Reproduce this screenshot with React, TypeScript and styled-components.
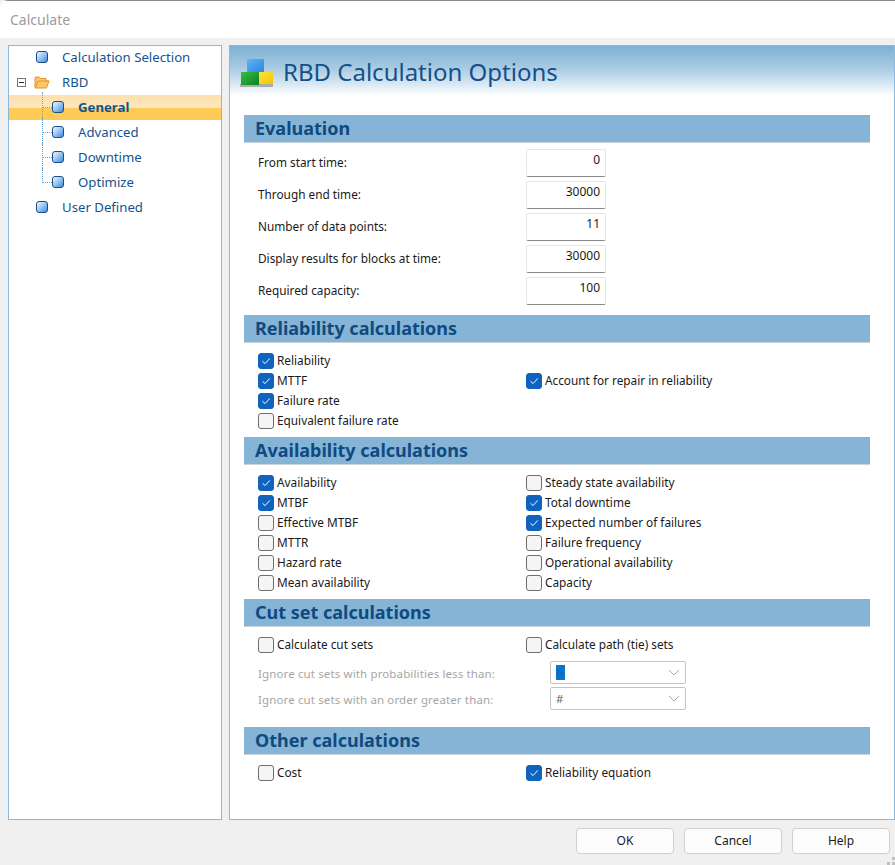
import React from 'react';
import styled, { createGlobalStyle } from 'styled-components';

const GlobalStyle = createGlobalStyle`
  html, body { margin: 0; padding: 0; background: #f0f0f0; }
  body { font-family: "Noto Sans", "Open Sans", "Liberation Sans", sans-serif; }
`;

const Win = styled.div`
  position: relative;
  width: 895px;
  height: 865px;
  overflow: hidden;
  background: #f0f0f0;
  display: flex;
  flex-direction: column;
  border-top-left-radius: 8px;
`;
const TitleBar = styled.div`
  height: 38px;
  flex: none;
  box-sizing: border-box;
  padding: 9px 0 0 10px;
  background: #fff;
  color: #9b9b9b;
  font-size: 14px;
  line-height: 20px;
  border-top: 1px solid #8a8a8a;
`;
const Main = styled.div`
  display: flex;
  gap: 7px;
  padding: 7px 0 0 8px;
  height: 775px;
  flex: none;
`;
const Tree = styled.div`
  width: 214px;
  flex: none;
  box-sizing: border-box;
  padding: 0 1px;
  box-shadow: inset 0 0 0 1px #8fb8d8;
  background: #fff;
`;
const TreeRow = styled.div<{ $depth: number; $selected?: boolean }>`
  height: 25px;
  display: flex;
  align-items: center;
  box-sizing: border-box;
  position: relative;
  padding: 0 0 2px ${(p) => (p.$depth === 1 ? 69 : 53)}px;
  font-size: 13.2px;
  color: #14538f;
  font-weight: ${(p) => (p.$selected ? 700 : 400)};
  background: ${(p) =>
    p.$selected
      ? 'linear-gradient(#fde0ad 0%, #fee6bd 50%, #ffcb57 52%, #ffcb57 100%)'
      : 'transparent'};
`;
const Bullet = styled.span<{ $depth: number }>`
  position: absolute;
  left: ${(p) => (p.$depth === 1 ? 43 : 27)}px;
  top: 6px;
  width: 12px;
  height: 12px;
  box-sizing: border-box;
  border: 1px solid #134f8b;
  border-radius: 3px;
  background: linear-gradient(135deg, #f2f7fd 0%, #a3c9f3 45%, #3f8ae0 100%);
`;
const Expander = styled.span`
  position: absolute;
  left: 8px;
  top: 8px;
  width: 9px;
  height: 9px;
  box-sizing: border-box;
  border: 1px solid #777;
  background: #fff;
  &::after {
    content: '';
    position: absolute;
    left: 1px;
    top: 3px;
    width: 5px;
    height: 1px;
    background: #222;
  }
`;
const FolderWrap = styled.span`
  position: absolute;
  left: 25px;
  top: 5px;
  display: flex;
`;
const Connector = styled.span<{ $last?: boolean }>`
  position: absolute;
  left: 33px;
  top: -3px;
  width: 9px;
  height: ${(p) => (p.$last ? 16 : 28)}px;
  box-sizing: border-box;
  border-left: 1px dotted #5da3d6;
  &::after {
    content: '';
    position: absolute;
    left: 0;
    top: 15px;
    width: 9px;
    border-top: 1px dotted #5da3d6;
  }
`;

const Panel = styled.div`
  flex: 1;
  box-sizing: border-box;
  border: 1px solid #8fb8d8;
  background: #fff;
  display: flex;
  flex-direction: column;
`;
const Header = styled.div`
  height: 50px;
  flex: none;
  display: flex;
  align-items: center;
  gap: 10px;
  padding-left: 10px;
  background: linear-gradient(#7eb0d4 0%, #a9cbe3 45%, #e6f0f7 85%, #ffffff 100%);
`;
const HeaderTitle = styled.div`
  font-size: 24px;
  color: #14508a;
  line-height: 32px;
  padding-top: 2px;
`;
const Body = styled.div`
  padding: 19px 24px 0 14px;
  display: flex;
  flex-direction: column;
`;
const SectionBar = styled.div`
  height: 28px;
  box-sizing: border-box;
  padding-left: 11px;
  background: #85b4d6;
  border-bottom: 1px solid #c9d3da;
  color: #0f4a80;
  font-size: 18px;
  font-weight: 700;
  line-height: 26px;
`;
const FormList = styled.div`
  display: flex;
  flex-direction: column;
  gap: 4px;
  padding: 6px 0 10px 14px;
`;
const FormRow = styled.div`
  display: grid;
  grid-template-columns: 268px 80px;
  align-items: center;
  height: 28px;
  font-size: 11.8px;
  color: #1a1a1a;
`;
const Label = styled.span`
  padding-bottom: 2px;
`;
const NumInput = styled.div`
  box-sizing: border-box;
  height: 28px;
  background: #fff;
  border: 1px solid #e6e6e6;
  border-bottom: 1px solid #8a8a8a;
  border-radius: 2px;
  text-align: right;
  padding: 1px 5px 0 0;
  font-size: 12px;
  line-height: 18px;
  color: #1a1a1a;
`;
const CheckGrid = styled.div<{ $pb: number }>`
  display: grid;
  grid-template-columns: 268px 1fr;
  grid-auto-rows: 20px;
  padding: 8px 0 ${(p) => p.$pb}px 14px;
`;
const CheckItem = styled.div`
  display: flex;
  align-items: center;
  gap: 3px;
  font-size: 11.8px;
  color: #1a1a1a;
`;
const Box = styled.span<{ $on?: boolean }>`
  width: 16px;
  height: 16px;
  flex: none;
  box-sizing: border-box;
  border-radius: 3px;
  display: flex;
  align-items: center;
  justify-content: center;
  border: 1px solid ${(p) => (p.$on ? '#0f62bd' : '#6e6e6e')};
  background: ${(p) => (p.$on ? '#0f62bd' : '#f5f5f5')};
`;
const IgnoreList = styled.div`
  display: flex;
  flex-direction: column;
  gap: 3px;
  padding: 6px 0 17px 14px;
`;
const IgnoreRow = styled.div`
  display: grid;
  grid-template-columns: 292px 136px;
  align-items: center;
  height: 23px;
  font-size: 11.5px;
  letter-spacing: 0.13px;
  color: #a6a6a6;
`;
const IgnoreLabel = styled.span`
  padding-top: 2px;
`;
const SelectBox = styled.div`
  box-sizing: border-box;
  height: 23px;
  border: 1px solid #c4c4c4;
  border-radius: 2px;
  background: #fff;
  display: flex;
  align-items: center;
  justify-content: space-between;
  padding: 0 5px;
  color: #666;
  font-size: 11.5px;
  letter-spacing: 0;
`;
const Selected = styled.span`
  background: #0078d7;
  color: #2a5f8f;
  line-height: 15px;
  padding: 0 1px;
`;
const Footer = styled.div`
  flex: 1;
  display: flex;
  justify-content: flex-end;
  gap: 10px;
  padding: 8px 5px 0 0;
`;
const Btn = styled.div`
  width: 98px;
  height: 26px;
  box-sizing: border-box;
  background: #fdfdfd;
  border: 1px solid #d0d0d0;
  border-radius: 4px;
  text-align: center;
  font-size: 12px;
  line-height: 24px;
  color: #1a1a1a;
`;
const Grip = styled.svg`
  position: absolute;
  right: 0;
  bottom: 0;
`;

const Tick = () => (
  <svg width="10" height="10" viewBox="0 0 10 10" fill="none">
    <path d="M1.5 5.2 L4 7.6 L8.8 2.4" stroke="#fff" strokeWidth="1" />
  </svg>
);

const Chevron = () => (
  <svg width="12" height="7" viewBox="0 0 12 7" fill="none">
    <path d="M1 1 L6 6 L11 1" stroke="#a8a8a8" strokeWidth="1" />
  </svg>
);

const Folder = () => (
  <svg width="16" height="14" viewBox="0 0 16 14">
    <path d="M1 13 V3 Q1 2 2 2 H5 L6.5 3.5 H12 V6 H15 L12.5 13 Z" fill="#fcc76f" stroke="#f0921e" strokeWidth="1" />
    <path d="M1.5 13 L4 6 H15" fill="none" stroke="#f0921e" strokeWidth="1" />
  </svg>
);

const Blocks = () => (
  <svg width="33" height="33" viewBox="0 0 33 33">
    <defs>
      <linearGradient id="blueBlock" x1="0" y1="0" x2="1" y2="1">
        <stop offset="0" stopColor="#5fb6f7" />
        <stop offset="1" stopColor="#2c83e0" />
      </linearGradient>
      <linearGradient id="greenBlock" x1="0" y1="0" x2="1" y2="1">
        <stop offset="0" stopColor="#35c040" />
        <stop offset="1" stopColor="#0d7f22" />
      </linearGradient>
      <linearGradient id="yellowBlock" x1="0" y1="0" x2="1" y2="1">
        <stop offset="0" stopColor="#ffe13a" />
        <stop offset="1" stopColor="#f5c400" />
      </linearGradient>
    </defs>
    <rect x="0" y="29" width="33" height="3" fill="#a9adab" />
    <rect x="7" y="4" width="17" height="13" rx="1" fill="url(#blueBlock)" />
    <rect x="1" y="17" width="18" height="13" fill="url(#greenBlock)" />
    <rect x="19" y="17" width="14" height="12" fill="url(#yellowBlock)" />
  </svg>
);

const Check = ({ label, on }: { label: string; on?: boolean }) => (
  <CheckItem>
    <Box $on={on}>{on && <Tick />}</Box>
    <Label>{label}</Label>
  </CheckItem>
);

const evaluation = [
  ['From start time:', '0'],
  ['Through end time:', '30000'],
  ['Number of data points:', '11'],
  ['Display results for blocks at time:', '30000'],
  ['Required capacity:', '100'],
];

const availability: [string, boolean][] = [
  ['Availability', true],
  ['Steady state availability', false],
  ['MTBF', true],
  ['Total downtime', true],
  ['Effective MTBF', false],
  ['Expected number of failures', true],
  ['MTTR', false],
  ['Failure frequency', false],
  ['Hazard rate', false],
  ['Operational availability', false],
  ['Mean availability', false],
  ['Capacity', false],
];

const App = () => {
  return (
    <Win>
      <GlobalStyle />
      <TitleBar>Calculate</TitleBar>
      <Main>
        <Tree>
          <TreeRow $depth={0}><Bullet $depth={0} />Calculation Selection</TreeRow>
          <TreeRow $depth={0}>
            <Expander />
            <FolderWrap><Folder /></FolderWrap>
            RBD
          </TreeRow>
          <TreeRow $depth={1} $selected><Connector /><Bullet $depth={1} />General</TreeRow>
          <TreeRow $depth={1}><Connector /><Bullet $depth={1} />Advanced</TreeRow>
          <TreeRow $depth={1}><Connector /><Bullet $depth={1} />Downtime</TreeRow>
          <TreeRow $depth={1}><Connector $last /><Bullet $depth={1} />Optimize</TreeRow>
          <TreeRow $depth={0}><Bullet $depth={0} />User Defined</TreeRow>
        </Tree>
        <Panel>
          <Header>
            <Blocks />
            <HeaderTitle>RBD Calculation Options</HeaderTitle>
          </Header>
          <Body>
            <SectionBar>Evaluation</SectionBar>
            <FormList>
              {evaluation.map(([label, value]) => (
                <FormRow key={label}>
                  <Label>{label}</Label>
                  <NumInput>{value}</NumInput>
                </FormRow>
              ))}
            </FormList>
            <SectionBar>Reliability calculations</SectionBar>
            <CheckGrid $pb={6}>
              <Check label="Reliability" on />
              <span />
              <Check label="MTTF" on />
              <Check label="Account for repair in reliability" on />
              <Check label="Failure rate" on />
              <span />
              <Check label="Equivalent failure rate" />
            </CheckGrid>
            <SectionBar>Availability calculations</SectionBar>
            <CheckGrid $pb={6}>
              {availability.map(([label, on]) => (
                <Check key={label} label={label} on={on} />
              ))}
            </CheckGrid>
            <SectionBar>Cut set calculations</SectionBar>
            <CheckGrid $pb={0}>
              <Check label="Calculate cut sets" />
              <Check label="Calculate path (tie) sets" />
            </CheckGrid>
            <IgnoreList>
              <IgnoreRow>
                <IgnoreLabel>Ignore cut sets with probabilities less than:</IgnoreLabel>
                <SelectBox><Selected>0</Selected><Chevron /></SelectBox>
              </IgnoreRow>
              <IgnoreRow>
                <IgnoreLabel>Ignore cut sets with an order greater than:</IgnoreLabel>
                <SelectBox>#<Chevron /></SelectBox>
              </IgnoreRow>
            </IgnoreList>
            <SectionBar>Other calculations</SectionBar>
            <CheckGrid $pb={0}>
              <Check label="Cost" />
              <Check label="Reliability equation" on />
            </CheckGrid>
          </Body>
        </Panel>
      </Main>
      <Footer>
        <Btn>OK</Btn>
        <Btn>Cancel</Btn>
        <Btn>Help</Btn>
      </Footer>
      <Grip width="8" height="8" viewBox="0 0 8 8">
        <rect x="5" y="0" width="3" height="3" fill="#c0c0c0" />
        <rect x="0" y="5" width="3" height="3" fill="#c0c0c0" />
        <rect x="5" y="5" width="3" height="3" fill="#c0c0c0" />
      </Grip>
    </Win>
  );
};

export default App;
